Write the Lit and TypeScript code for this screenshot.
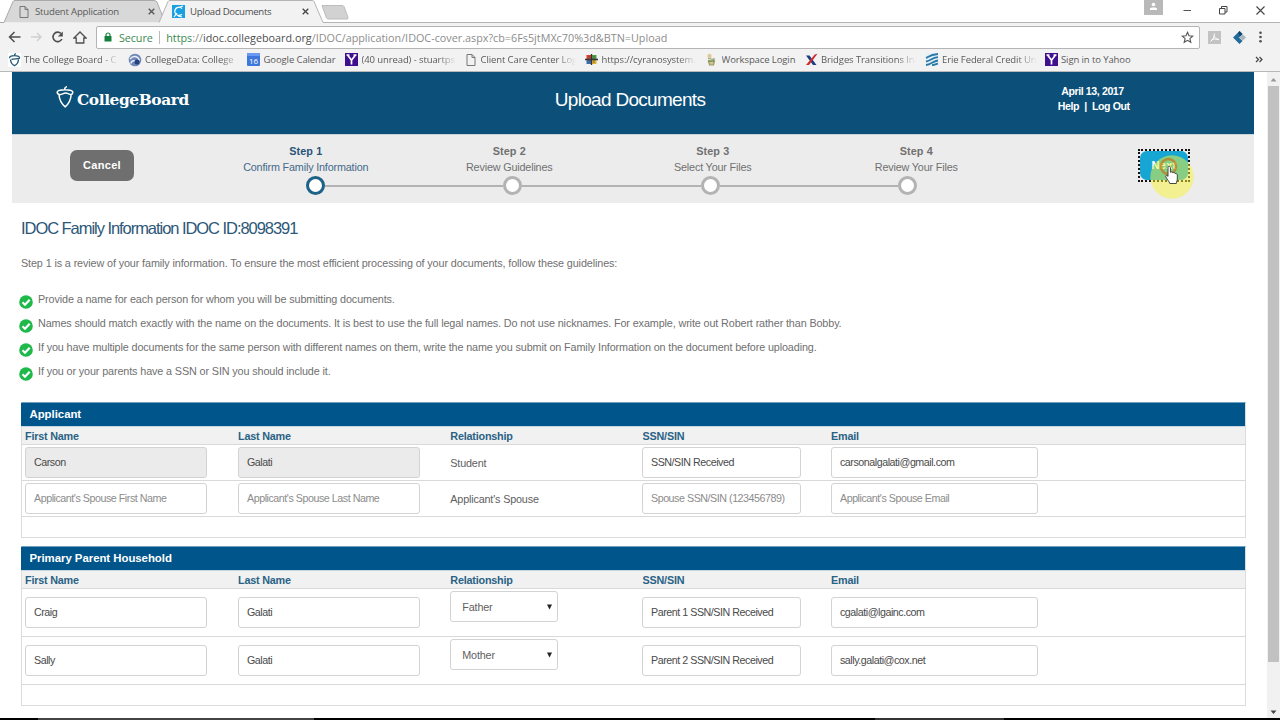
import { LitElement, html, css, svg } from "lit";
import { customElement, property } from "lit/decorators.js";
import { classMap } from "lit/directives/class-map.js";

const pageIcon = html`<svg width="12" height="14" viewBox="0 0 12 14"><path d="M2 1.5h5l3 3v8H2z M7 1.5v3h3" fill="none" stroke="#777" stroke-width="1"/></svg>`;
const yahooIcon = html`<svg width="13" height="13" viewBox="0 0 13 13"><rect width="13" height="13" fill="#3f0f8f"/><path d="M2.5 2l4 5.2 4-5.2M6.5 7v4.5M1.5 2h3M8.500 2h3" stroke="#fff" stroke-width="1.7" fill="none"/></svg>`;

const icons: Record<string, unknown> = {
  page: pageIcon,
  yahoo: yahooIcon,
  acorn: html`<svg width="13" height="14" viewBox="0 0 13 14"><rect width="13" height="14" fill="#fff"/><path d="M1.500 5.200c0-2 2.200-2.500 5-2.500s5 .5 5 2.500c-1.500 1.200-6 0-8 1.200M2.500 6.500c.2 3 1.500 5 4 6.200 2.500-1.200 3.800-3.200 4-6.200M6.500 2.500c0-1 .4-1.500 1.200-2" fill="none" stroke="#1e5878" stroke-width="1.300"/></svg>`,
  data: html`<svg width="14" height="14" viewBox="0 0 14 14"><circle cx="7" cy="7" r="6.300" fill="#6f86b6"/><path d="M2 6c3-4 8-3 9.500 1.500M3 10.500c0-3 4-4 6-1" fill="none" stroke="#e6ecf6" stroke-width="1.500"/><circle cx="9" cy="9" r="2.500" fill="#23407f"/></svg>`,
  calendar: html`<svg width="13" height="13" viewBox="0 0 13 13"><rect width="13" height="13" rx="1" fill="#3f78dd"/><rect width="13" height="3" rx="1" fill="#6b9af0"/><text x="6.500" y="11" text-anchor="middle" font-size="8" font-family="Open Sans, sans-serif" fill="#fff">16</text></svg>`,
  cyrano: html`<svg width="13" height="13" viewBox="0 0 13 13"><rect x="1.500" y="2" width="4.500" height="4" fill="#d6402c"/><rect x="7" y="2" width="4.500" height="4" fill="#4aa04a"/><rect x="1.500" y="7" width="4.500" height="4" fill="#3a6fb5"/><rect x="7" y="7" width="4.500" height="4" fill="#e3b32f"/><path d="M6.500 1v11M0 6.500h13" stroke="#333" stroke-width="1.300"/><path d="M4 3v7M9 3v7" stroke="#555" stroke-width=".7"/></svg>`,
  workspace: html`<svg width="13" height="13" viewBox="0 0 13 13"><circle cx="4.500" cy="3" r="2.200" fill="#dccb9a"/><path d="M3 5.500l6 1M3.500 8h6l-1 4h-4zM9 5v4" stroke="#9a9a68" stroke-width="1.200" fill="#d3c48f"/><path d="M3 8h6" stroke="#5a8a3a" stroke-width="1"/></svg>`,
  bridges: html`<svg width="13" height="13" viewBox="0 0 13 13"><path d="M1 2.500h3.500l7 9.500H8z" fill="#1d3e80"/><path d="M12.500.8L9.800 1.500 1 12h3z" fill="#d02a2a"/></svg>`,
  erie: html`<svg width="14" height="13" viewBox="0 0 14 13"><rect x=".5" width="13" height="13" fill="#e6f1f7"/><path d="M1 5C4 3.500 5 1.500 13 1M1 8.500C5 8 7 4.500 13 4.200M1 12c5-.5 7-4 12-4.500M7 12.200c2 0 4-1.200 6-1.500" stroke="#2a78a8" stroke-width="1.800" fill="none"/></svg>`,
};

interface Bookmark { icon: string; label: string; width: number; fade?: boolean; }

const bookmarks: Bookmark[] = [
  { icon: "acorn", label: "The College Board - C", width: 120, fade: true },
  { icon: "data", label: "CollegeData: College", width: 119.5, fade: true },
  { icon: "calendar", label: "Google Calendar", width: 98 },
  { icon: "yahoo", label: "(40 unread) - stuartps", width: 120, fade: true },
  { icon: "page", label: "Client Care Center Log", width: 120, fade: true },
  { icon: "cyrano", label: "https://cyranosystem.", width: 120, fade: true },
  { icon: "workspace", label: "Workspace Login", width: 99.5 },
  { icon: "bridges", label: "Bridges Transitions Inc", width: 120, fade: true },
  { icon: "erie", label: "Erie Federal Credit Uni", width: 120, fade: true },
  { icon: "yahoo", label: "Sign in to Yahoo", width: 100 },
];

@customElement("browser-chrome")
export class BrowserChrome extends LitElement {
  static styles = css`
    :host { display: block; height: 72px; box-sizing: border-box; background: #f2f2f2; border-bottom: 1px solid #b9b9b9; font-family: "Open Sans", "Noto Sans", sans-serif; color: #5a5a5a; }
    svg { display: block; flex: none; }
    .strip { position: relative; height: 23px; background: #fff; display: flex; align-items: center; }
    .shapes { position: absolute; left: 0; top: 0; }
    .tab { position: relative; display: flex; align-items: center; height: 23px; font-size: 9.600px; white-space: nowrap; box-sizing: border-box; }
    .first { width: 155px; padding-left: 18px; gap: 5px; letter-spacing: -0.2px; }
    .second { width: 154px; padding-left: 17px; gap: 5px; color: #4c4c4c; letter-spacing: -0.3px; }
    .close { margin-left: auto; }
    .controls { position: relative; margin-left: auto; display: flex; height: 21px; align-items: center; align-self: flex-start; }
    .user { align-self: flex-start; margin-right: 20px; }
    .mini { margin-right: 27px; }
    .max { margin-right: 28px; }
    .x { margin-right: 15px; }
    .toolbar { height: 27px; display: flex; align-items: center; padding: 1px 8px 0; box-sizing: border-box; }
    .nav { display: flex; width: 88px; gap: 8.500px; align-items: center; }
    .bar { width: 1104px; height: 23px; box-sizing: border-box; border: 1px solid #b4b4b4; border-radius: 2px; background: #fff; display: flex; align-items: center; padding: 0 5px 0 7px; font-size: 10.800px; white-space: nowrap; color: #8c8c8c; }
    .secure { color: #3d8a50; margin-left: 7px; letter-spacing: -0.1px; }
    .sep { width: 1px; height: 13px; background: #bbb; margin: 0 6.500px 0 6px; }
    .url { letter-spacing: 0; }
    .https { color: #3d8a50; }
    .host { color: #4d4d4d; }
    .star { margin-left: auto; }
    .extras { display: flex; align-items: center; gap: 12px; padding-left: 8px; }
    .marks { height: 19px; display: flex; align-items: center; padding-left: 7.500px; font-size: 9.500px; letter-spacing: -0.1px; }
    .mark { display: flex; align-items: center; gap: 3.500px; box-sizing: border-box; flex: none; }
    .label { white-space: nowrap; overflow: hidden; width: 97px; }
    .fade { -webkit-mask-image: linear-gradient(90deg, #000 76px, transparent 95px); mask-image: linear-gradient(90deg, #000 76px, transparent 95px); }
    .more { margin-left: auto; margin-right: 17px; }
  `;

  render() {
    return html`
      <div class="strip">
        <svg class="shapes" width="1280" height="23" viewBox="0 0 1280 23">
          <path d="M0 22.500H4L13 1.500Q13.500.5 15 .5H154Q156 .5 157 2L165 22.500" fill="#d8d8d8" stroke="#a9a9a9"/>
          <path d="M322 5.500h20q1.500 0 2 1l4 11q.5 1.500-1 1.500h-18q-2 0-2.500-1z" fill="#d2d2d2" stroke="#bcbcbc"/>
          <path d="M159 23L168 1.500Q168.500.5 170 .5H312Q313.500.5 314 1.500L323 22.500V23z" fill="#f2f2f2"/>
          <path d="M159 22.500L168 1.500Q168.500.5 170 .5H312Q313.500.5 314 1.500L323 22.500H1280" fill="none" stroke="#b4b4b4"/>
        </svg>
        <div class="tab first">${pageIcon}<span>Student Application</span>
          <svg class="close" width="7" height="7" viewBox="0 0 7 7"><path d="M.7.7l5.600 5.600M6.300.7L.7 6.300" stroke="#555" stroke-width="1.300"/></svg>
        </div>
        <div class="tab second">
          <svg width="13" height="13" viewBox="0 0 13 13"><rect width="13" height="13" fill="#1b9fe3"/><path d="M10 3.500c-3-3-7.500-.5-7.200 3.200.2 3.500 4.200 5 7.200 2.500M2 12l3-4M8 2l3-1M6 11l4 1" fill="none" stroke="#fff" stroke-width="1.200"/></svg>
          <span>Upload Documents</span>
          <svg class="close" width="7" height="7" viewBox="0 0 7 7"><path d="M.7.7l5.600 5.600M6.300.7L.7 6.300" stroke="#444" stroke-width="1.300"/></svg>
        </div>
        <div class="controls">
          <svg class="user" width="19" height="15" viewBox="0 0 19 15"><rect width="19" height="15" fill="#b9b9b9"/><circle cx="9.500" cy="4.500" r="1.800" fill="#fff"/><path d="M6 10V8.500c0-1.500 7-1.500 7 0V10z" fill="#fff"/></svg>
          <svg class="mini" width="9" height="9" viewBox="0 0 9 9"><path d="M.5 4.500h7.500" stroke="#555"/></svg>
          <svg class="max" width="9" height="9" viewBox="0 0 9 9"><path d="M.5 2.500h5.500v5.500H.5zM2.500 2.500v-2h5.500v5.500h-2" fill="none" stroke="#444"/></svg>
          <svg class="x" width="9" height="9" viewBox="0 0 9 9"><path d="M.5.5l8 8M8.500.5l-8 8" stroke="#444" stroke-width="1.100"/></svg>
        </div>
      </div>
      <div class="toolbar">
        <div class="nav">
          <svg width="13" height="12" viewBox="0 0 13 12"><path d="M12.500 6H1.500M6.500 1L1.500 6l5 5" fill="none" stroke="#4f4f4f" stroke-width="1.500"/></svg>
          <svg width="13" height="12" viewBox="0 0 13 12"><path d="M1 6h10M7 2l4 4-4 4" fill="none" stroke="#cfcfcf" stroke-width="1.400"/></svg>
          <svg width="13" height="12" viewBox="0 0 13 12"><path d="M10 2.500A4.700 4.700 0 1 0 10.900 8" fill="none" stroke="#4f4f4f" stroke-width="1.600"/><path d="M11.800.5v5h-5z" fill="#4f4f4f"/></svg>
          <svg width="14" height="13" viewBox="0 0 14 13"><path d="M1 7l6-6 6 6h-2.200v5H3.200V7z" fill="none" stroke="#4f4f4f" stroke-width="1.300"/></svg>
        </div>
        <div class="bar">
          <svg width="8" height="10" viewBox="0 0 8 10"><rect x=".5" y="4" width="7" height="5.500" rx=".5" fill="#13803c"/><path d="M2 4.500V3a2 2 0 0 1 4 0v1.500" fill="none" stroke="#13803c" stroke-width="1.200"/></svg>
          <span class="secure">Secure</span><span class="sep"></span>
          <span class="url"><span class="https">https</span>://<span class="host">idoc.collegeboard.org</span>/IDOC/application/IDOC-cover.aspx?cb=6Fs5jtMXc70%3d&amp;BTN=Upload</span>
          <svg class="star" width="13" height="13" viewBox="0 0 13 13"><path d="M6.500 1.300l1.500 3.500 3.700.3-2.800 2.500.9 3.700-3.300-2-3.300 2 .9-3.700L1.300 5.100 5 4.800z" fill="none" stroke="#555" stroke-width="1.100"/></svg>
        </div>
        <div class="extras">
          <svg width="13" height="13" viewBox="0 0 13 13"><rect width="13" height="13" fill="#c3c3c3"/><path d="M2.500 10.500C5 8.500 6.500 6 6.300 2.500M6.300 5c.7 2.500 2.200 3.500 4.700 3.700M3.500 9c2-1 4-1.300 7-.8" fill="none" stroke="#fff"/></svg>
          <svg width="13" height="13" viewBox="0 0 13 13"><path d="M6.500 0l3 3-3.500 3.500 3.500 3.500-3 3L0 6.500z" fill="#226b9b"/><path d="M9.700 3.300L13 6.500l-3.300 3.200-3.200-3.200z" fill="#a9b6bd"/><path d="M6.500 0l3 3-2.500 2.500-2-3.500z" fill="#15486e"/></svg>
          <svg width="5" height="12" viewBox="0 0 5 12"><g fill="#4f4f4f"><circle cx="2.500" cy="1.800" r="1.300"/><circle cx="2.500" cy="6" r="1.300"/><circle cx="2.500" cy="10.200" r="1.300"/></g></svg>
        </div>
      </div>
      <div class="marks">
        ${bookmarks.map(b => html`<div class="mark" style="width:${b.width}px">${icons[b.icon]}<span class=${classMap({ label: true, fade: !!b.fade })}>${b.label}</span></div>`)}
        <svg class="more" width="8" height="7" viewBox="0 0 8 7"><path d="M1 1l2.500 2.500L1 6M4.500 1L7 3.500 4.500 6" fill="none" stroke="#444" stroke-width="1.200"/></svg>
      </div>`;
  }
}

const steps = ["Confirm Family Information", "Review Guidelines", "Select Your Files", "Review Your Files"];

@customElement("step-bar")
export class StepBar extends LitElement {
  static styles = css`
    :host { display: flex; height: 69px; box-sizing: border-box; background: #ececec; border-top: 1px solid #c9d3da; font-size: 10.800px; color: #707070; }
    .side { width: 192px; padding: 15px 0 0 58px; box-sizing: border-box; flex: none; }
    .button { height: 31px; box-sizing: border-box; border-radius: 7px; color: #fff; font-weight: bold; font-size: 11px; display: flex; align-items: center; justify-content: center; letter-spacing: 0.3px; padding-bottom: 1px; }
    .cancel { width: 64px; background: #6f6f6f; }
    .middle { width: 814px; flex: none; padding-top: 8px; }
    .names { display: grid; grid-template-columns: repeat(4, 203.500px); text-align: center; }
    .name { line-height: 16px; white-space: nowrap; letter-spacing: -0.17px; }
    .name b { display: block; letter-spacing: 0.1px; }
    .active { color: #46698a; }
    .active b { color: #2a5478; }
    .track { display: flex; align-items: center; padding-left: 102px; margin-top: 1px; }
    .dot { width: 19px; height: 19px; box-sizing: border-box; border: 3px solid #b3b3b3; border-radius: 50%; background: #fff; flex: none; }
    .current { border-color: #1d6289; }
    .line { width: 178.400px; height: 2px; background: #b3b3b3; }
    .end { margin-left: auto; padding-right: 64px; padding-top: 14px; }
    .focus { position: relative; width: 52px; height: 33px; box-sizing: border-box; border: 2px dotted #111; }
    .next { height: 29px; background: #17a6d3; }
    .pointer { position: absolute; left: 8px; top: 2px; }
  `;

  render() {
    return html`
      <div class="side"><div class="button cancel">Cancel</div></div>
      <div class="middle">
        <div class="names">${steps.map((s, i) => html`<div class=${classMap({ name: true, active: i === 0 })}><b>Step ${i + 1}</b>${s}</div>`)}</div>
        <div class="track">${steps.map((_, i) => html`${i ? html`<span class="line"></span>` : ""}<span class=${classMap({ dot: true, current: i === 0 })}></span>`)}</div>
      </div>
      <div class="end"><div class="focus"><div class="button next">Next</div>
        <svg class="pointer" width="48" height="48" viewBox="0 0 48 48">
          <circle cx="24" cy="24" r="21.700" fill="#f8f436" fill-opacity=".5"/>
          <circle cx="20.500" cy="13.500" r="7.500" fill="none" stroke="#c07a1c" stroke-opacity=".75" stroke-width="2.500"/>
          <path d="M20 14.500c0-1.800 2.400-1.800 2.400 0v4.800c1-.7 2.200-.4 2.400.5 1-.5 2.100-.2 2.300.7 1-.3 2.200.2 2.200 1.500v4c0 1.500-.8 2.500-1 4.500h-6.500c-.5-2-3.300-4.800-4-6.700-.4-1.400 1-1.900 2.200-.4z" fill="#fff" stroke="#333" stroke-width=".9"/>
        </svg></div></div>`;
  }
}

interface Cell { value?: string; hint?: string; locked?: boolean; }
interface Person { first: Cell; last: Cell; relation: string; choice?: boolean; ssn: Cell; email: Cell; }

@customElement("person-table")
export class PersonTable extends LitElement {
  @property() heading = "";
  @property({ attribute: false }) people: Person[] = [];
  @property({ type: Boolean }) tall = false;

  static styles = css`
    :host { display: block; box-sizing: border-box; border: 1px solid #dcdcdc; border-top-color: #6f9fbe; width: 1225px; }
    .title { height: 24px; background: #00558a; color: #fff; font-weight: bold; font-size: 11.400px; line-height: 23px; letter-spacing: -0.03px; border-bottom: 1px solid #c8d8e2; box-sizing: border-box; margin-left: -1px; padding-left: 8.500px; }
    .row { display: grid; grid-template-columns: 213px 212.300px 192.200px 188.500px 1fr; padding-left: 3px; height: 36px; box-sizing: border-box; border-bottom: 1px solid #d9d9d9; align-items: center; }
    .head { height: 18px; background: #f1f1f1; font-weight: bold; font-size: 10.800px; color: #2a6285; letter-spacing: -0.2px; }
    .tall { height: 48px; }
    input { display: block; height: 31px; width: 182px; box-sizing: border-box; border: 1px solid #d3d3d3; border-radius: 3px; padding: 0 0 1px 8px; font-family: inherit; font-size: 10.700px; color: #4a4a4a; background: #fff; letter-spacing: -0.460px; }
    input::placeholder { color: #8c8c8c; }
    .locked { background: #ebebeb; }
    .ssn { width: 159px; margin-left: -0.500px; }
    .email { width: 207px; }
    .relation { font-size: 10.800px; color: #606060; letter-spacing: -0.17px; }
    .choice { width: 108px; height: 31px; box-sizing: border-box; border: 1px solid #d3d3d3; border-radius: 3px; align-self: start; margin-top: 2px; display: flex; align-items: center; justify-content: space-between; padding: 0 5px 0 11px; background: #fff; }
    .foot { height: 20px; }
  `;

  private field(cell: Cell, kind = "") {
    return html`<input class=${`${kind} ${cell.locked ? "locked" : ""}`} .value=${cell.value ?? ""} placeholder=${cell.hint ?? ""}>`;
  }

  render() {
    return html`
      <div class="title">${this.heading}</div>
      <div class="row head"><span>First Name</span><span>Last Name</span><span>Relationship</span><span>SSN/SIN</span><span>Email</span></div>
      ${this.people.map(p => html`<div class=${classMap({ row: true, tall: this.tall })}>
        <div>${this.field(p.first)}</div><div>${this.field(p.last)}</div>
        <div class=${classMap({ relation: true, choice: !!p.choice })}>${p.relation}${p.choice ? html`<svg width="5" height="6" viewBox="0 0 5 6"><path d="M0 .5h5L2.500 5.500z" fill="#222"/></svg>` : ""}</div>
        <div>${this.field(p.ssn, "ssn")}</div><div>${this.field(p.email, "email")}</div></div>`)}
      <div class="foot"></div>`;
  }
}

const applicants: Person[] = [
  { first: { value: "Carson", locked: true }, last: { value: "Galati", locked: true }, relation: "Student", ssn: { value: "SSN/SIN Received" }, email: { value: "carsonalgalati@gmail.com" } },
  { first: { hint: "Applicant's Spouse First Name" }, last: { hint: "Applicant's Spouse Last Name" }, relation: "Applicant's Spouse", ssn: { hint: "Spouse SSN/SIN (123456789)" }, email: { hint: "Applicant's Spouse Email" } },
];
const parents: Person[] = [
  { first: { value: "Craig" }, last: { value: "Galati" }, relation: "Father", choice: true, ssn: { value: "Parent 1 SSN/SIN Received" }, email: { value: "cgalati@lgainc.com" } },
  { first: { value: "Sally" }, last: { value: "Galati" }, relation: "Mother", choice: true, ssn: { value: "Parent 2 SSN/SIN Received" }, email: { value: "sally.galati@cox.net" } },
];
const guidelines = [
  "Provide a name for each person for whom you will be submitting documents.",
  "Names should match exactly with the name on the documents. It is best to use the full legal names. Do not use nicknames. For example, write out Robert rather than Bobby.",
  "If you have multiple documents for the same person with different names on them, write the name you submit on Family Information on the document before uploading.",
  "If you or your parents have a SSN or SIN you should include it.",
];

@customElement("app-root")
export class AppRoot extends LitElement {
  static styles = css`
    :host { display: flex; flex-direction: column; width: 1280px; height: 720px; overflow: hidden; background: #fff; font-family: "Liberation Sans", Arial, sans-serif; }
    svg { display: block; flex: none; }
    .view { display: flex; height: 646px; overflow: hidden; }
    .page { width: 1242px; padding-left: 12px; flex: none; }
    .banner { height: 62px; background: #0c4f78; color: #fff; display: grid; grid-template-columns: 400px 436px 1fr; box-sizing: border-box; }
    .brand { display: flex; align-items: flex-start; padding: 14px 0 0 44px; gap: 2px; }
    .wordmark { font-family: "DejaVu Serif", serif; font-weight: bold; font-size: 15.400px; line-height: 28px; letter-spacing: -0.4px; }
    .title { text-align: center; font-size: 19px; line-height: 55px; letter-spacing: -0.7px; white-space: nowrap; }
    .account { font-weight: bold; font-size: 10.600px; line-height: 15px; padding-top: 12px; text-align: center; width: 489px; white-space: pre; letter-spacing: -0.4px; }
    .content { padding: 0 0 0 9px; }
    h1 { margin: 0; padding-top: 15px; font-weight: normal; font-size: 16.500px; line-height: 21px; color: #2d5777; letter-spacing: -1.050px; white-space: nowrap; }
    .intro { margin: 15px 0 20px; font-size: 10.800px; line-height: 18px; color: #707070; letter-spacing: -0.115px; white-space: nowrap; }
    .list { margin: 0 0 14px; padding: 0; list-style: none; }
    .item { display: flex; gap: 5.500px; height: 24px; font-size: 10.800px; line-height: 14px; color: #707070; letter-spacing: -0.120px; white-space: nowrap; margin-left: -2.500px; }
    .item svg { margin-top: 3px; }
    person-table + person-table { margin-top: 8px; }
    .scroll { margin-left: auto; width: 13px; background: #f1f1f1; display: flex; flex-direction: column; align-items: center; padding: 5px 0 3px; box-sizing: border-box; }
    .thumb { width: 11px; height: 576px; background: #c1c1c1; margin-top: 4px; }
    .down { margin-top: auto; }
    .taskbar { height: 2px; background: linear-gradient(90deg, #000 38px, #444 38px, #444 314px, #000 314px, #000 875px, #333 875px, #333 1004px, #000 1004px); }
  `;

  render() {
    const tick = svg`<circle cx="7" cy="7" r="6.800" fill="#1fb84a"/><path d="M3.500 7.200l2.500 2.500 4.700-4.900" fill="none" stroke="#fff" stroke-width="2.200"/>`;
    return html`
      <browser-chrome></browser-chrome>
      <div class="view">
        <div class="page">
          <div class="banner">
            <div class="brand">
              <svg width="19" height="23" viewBox="0 0 19 23"><path d="M3.200 8.500C1.500 8 1 7.200 1.200 6c.4-2.200 4.300-2.300 7.800-2.300s7.400.1 7.800 2.300c.1 1.400-.5 2.300-1.800 2.700M3.200 8.500c2 .8 4-1.400 6.300-1.400 2 0 3.500 1.200 5.500 1.600M3 8.500c.3 5.500 2.500 9.300 6.200 12.300 3.600-3 5.600-6.500 6-12.300M8.700 3.700C8.500 2.300 9.500 1 11 .6" fill="none" stroke="#fff" stroke-width="1.500"/></svg>
              <span class="wordmark">CollegeBoard</span>
            </div>
            <div class="title">Upload Documents</div>
            <div class="account">April 13, 2017
 Help  |  Log Out</div>
          </div>
          <step-bar></step-bar>
          <div class="content">
            <h1>IDOC Family Information IDOC ID:8098391</h1>
            <p class="intro">Step 1 is a review of your family information. To ensure the most efficient processing of your documents, follow these guidelines:</p>
            <ul class="list">${guidelines.map(g => html`<li class="item"><svg width="14" height="14" viewBox="0 0 14 14">${tick}</svg>${g}</li>`)}</ul>
            <person-table heading="Applicant" .people=${applicants}></person-table>
            <person-table heading="Primary Parent Household" tall .people=${parents}></person-table>
          </div>
        </div>
        <div class="scroll">
          <svg width="7" height="5" viewBox="0 0 7 5"><path d="M.5 4.500L3.500 1l3 3.500z" fill="#999"/></svg>
          <div class="thumb"></div>
          <svg class="down" width="7" height="5" viewBox="0 0 7 5"><path d="M.5.5L3.500 4l3-3.500z" fill="#444"/></svg>
        </div>
      </div>
      <div class="taskbar"></div>`;
  }
}
